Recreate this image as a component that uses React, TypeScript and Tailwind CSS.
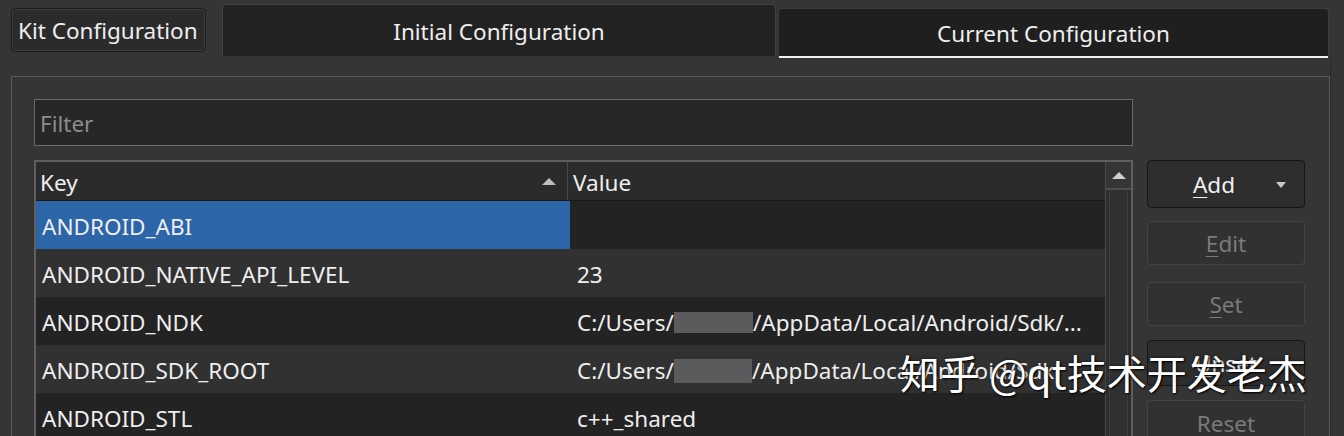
import React from "react";

const font = { fontFamily: '"Noto Sans", "Open Sans", sans-serif' };

function Btn({ ul, rest, enabled, dropdown, h, mt }: { ul: string; rest: string; enabled?: boolean; dropdown?: boolean; h: string; mt: string }) {
  return (
    <div
      className={`relative flex items-center justify-center rounded-[4px] pt-[2px] ${dropdown ? "pr-[24px]" : ""} ${h} ${mt} ${
        enabled ? "border border-[#161616] bg-[#2e2e2e] text-[#f0f0f0]" : "border border-[#444444] bg-[#313131] text-[#7a7a7a]"
      } text-[22.5px]`}
    >
      <span>
        <span className="underline underline-offset-[4px] decoration-1">{ul}</span>
        {rest}
      </span>
      {dropdown && (
        <svg className="absolute right-[17px] top-[20px]" width="12" height="8" viewBox="0 0 12 8">
          <path d="M1 1 L11 1 L6 7 Z" fill="#c8c8c8" />
        </svg>
      )}
    </div>
  );
}

const rows: { k: string; v: React.ReactNode }[] = [
  { k: "ANDROID_ABI", v: "" },
  { k: "ANDROID_NATIVE_API_LEVEL", v: "23" },
  {
    k: "ANDROID_NDK",
    v: (
      <span className="flex items-center">
        C:/Users/
        <span className="inline-block h-[21px] w-[79px] bg-[#5b5b5e]" />
        /AppData/Local/Android/Sdk/...
      </span>
    ),
  },
  {
    k: "ANDROID_SDK_ROOT",
    v: (
      <span className="flex items-center">
        C:/Users/
        <span className="inline-block h-[24px] w-[78px] bg-[#5b5b5e]" />
        /AppData/Local/Android/Sdk
      </span>
    ),
  },
  { k: "ANDROID_STL", v: "c++_shared" },
];

export default function App() {
  return (
    <div className="relative h-[436px] w-[1344px] overflow-hidden bg-[#353535] text-[22.5px] text-[#eeeeee]" style={font}>
      {/* top bar */}
      <div className="flex items-start">
        <div className="ml-[11px] mt-[8px] flex h-[44px] w-[195px] items-center rounded-[4px] border border-[#1c1c1c] bg-[#2b2b2b] pl-[6px] pt-[2px] shadow-[inset_0_0_0_1px_#3c3c3c]">
          Kit Configuration
        </div>
        <div className="ml-[16px] mt-[4px] flex h-[52px] w-[554px] items-center justify-center rounded-t-[4px] border border-[#414141] border-b-0 bg-[#222222] pt-[2px]">
          Initial Configuration
        </div>
        <div className="ml-[2px] mt-[8px] flex h-[50px] w-[551px] flex-col rounded-t-[4px] border border-[#3c3c3c] border-b-0 bg-[#1f1f1f]">
          <div className="flex flex-1 items-center justify-center pt-[2px]">Current Configuration</div>
          <div className="h-[2px] bg-[#f2f2f2]" />
        </div>
      </div>

      {/* group frame */}
      <div className="ml-[11px] mt-[18px] h-[400px] w-[1319px] border border-[#5a5a5a] border-b-0 pl-[22px] pt-[22px]">
        <div className="flex">
          <div className="flex w-[1099px] flex-col">
            <div className="flex h-[47px] items-center border border-[#6a6a6a] bg-[#272727] pl-[5px] pt-[2px] text-[#8c8c8c]">
              Filter
            </div>
            <div className="mt-[14px] flex h-[300px] border-2 border-b-0 border-[#5f5f5f] bg-[#232323]">
              <div className="flex flex-1 flex-col">
                {/* header */}
                <div className="flex h-[39px] border-b border-[#1a1a1a] bg-[#2b2b2b]">
                  <div className="relative flex w-[532px] items-center border-r border-[#4a4a4a] pl-[4px] pt-[3px]">
                    Key
                    <svg className="absolute right-[10px] top-[15px]" width="16" height="8" viewBox="0 0 16 8">
                      <path d="M1 8 L15 8 L8 1 Z" fill="#bdbdbd" />
                    </svg>
                  </div>
                  <div className="flex flex-1 items-center pl-[5px] pt-[3px]">Value</div>
                </div>
                {rows.map((r, i) => (
                  <div key={r.k} className={`flex h-[48px] ${i % 2 === 1 ? "bg-[#313131]" : "bg-[#232323]"}`}>
                    <div className={`flex w-[534px] items-center pl-[6px] pt-[3px] ${i === 0 ? "bg-[#2c65a8]" : ""}`}>{r.k}</div>
                    <div className="flex flex-1 items-center pl-[7px] pt-[3px]">{r.v}</div>
                  </div>
                ))}
              </div>
              {/* scrollbar */}
              <div className="flex w-[26px] flex-col border-l border-[#4a4a4a] bg-[#2e2e2e]">
                <div className="flex h-[28px] items-center justify-center border-b-2 border-[#4d4d4d] bg-[#353535]">
                  <svg width="16" height="8" viewBox="0 0 16 8">
                    <path d="M1 8 L15 8 L8 1 Z" fill="#cfcfcf" />
                  </svg>
                </div>
                <div className="mx-[3px] flex-1 border-x border-[#3e3e3e] bg-[#303030]" />
              </div>
            </div>
          </div>
          <div className="ml-[14px] flex w-[158px] flex-col pt-[61px]">
            <Btn ul="A" rest="dd" enabled dropdown h="h-[48px]" mt="mt-0" />
            <Btn ul="E" rest="dit" h="h-[44px]" mt="mt-[13px]" />
            <Btn ul="S" rest="et" h="h-[44px]" mt="mt-[17px]" />
            <Btn ul="U" rest="nset" enabled h="h-[46px]" mt="mt-[14px]" />
            <Btn ul="" rest="Reset" h="h-[45px]" mt="mt-[14px]" />
          </div>
        </div>
      </div>
      <div className="absolute right-[0px] top-[58px] h-[378px] w-[14px] border-l border-[#2a2a2a]" />

      {/* watermark */}
      <div
        className="absolute left-[900px] top-[346px] whitespace-nowrap text-[40px] leading-[52px] text-white"
        style={{ fontFamily: '"Noto Sans CJK SC", "Noto Sans", sans-serif', textShadow: "1px 1px 2px #000, 0 0 3px rgba(0,0,0,0.6)" }}
      >
        知乎 @qt技术开发老杰
      </div>
    </div>
  );
}
